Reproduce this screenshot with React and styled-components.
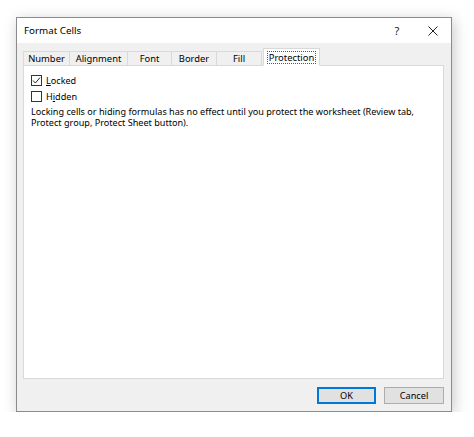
import React from 'react'
import styled, { createGlobalStyle } from 'styled-components'

const GlobalStyle = createGlobalStyle`
  body {
    margin: 0;
    background: #ffffff;
    font-family: "Noto Sans", "Open Sans", sans-serif;
    font-size: 9.1px;
    color: #000000;
  }
`

const Page = styled.div`
  padding: 17px 0 0 16px;
`

const Dialog = styled.div`
  background: #f0f0f0;
  border: 1px solid #8c8c8c;
  box-shadow: 2px 3px 14px rgba(0, 0, 0, 0.22);
  box-sizing: border-box;
  display: flex;
  flex-direction: column;
  height: 395px;
  width: 436px;
`

const TitleBar = styled.div`
  align-items: center;
  background: #ffffff;
  display: flex;
  height: 25px;
  padding-left: 7px;
`

const Title = styled.div`
  flex: 1;
  font-size: 9.8px;
`

const TitleButton = styled.div`
  align-items: center;
  color: #222;
  display: flex;
  font-size: 11px;
  height: 25px;
  justify-content: center;
  width: 36px;
`

const Body = styled.div`
  display: flex;
  flex: 1;
  flex-direction: column;
  padding: 5px 7px 0 6px;
`

const TabRow = styled.div`
  align-items: flex-end;
  display: flex;
  height: 18px;
  margin-bottom: -1px;
  position: relative;
  z-index: 1;
`

const Tab = styled.div`
  align-items: center;
  background: ${p => (p.active ? '#ffffff' : '#f0f0f0')};
  border: 1px solid #d9d9d9;
  border-bottom: ${p => (p.active ? '1px solid #ffffff' : '1px solid #d9d9d9')};
  border-left: ${p => (p.first || p.active ? '1px solid #d9d9d9' : 'none')};
  box-sizing: border-box;
  display: flex;
  height: ${p => (p.active ? '18px' : '15px')};
  justify-content: center;
  margin-left: ${p => (p.active ? '1px' : '0')};
  min-width: ${p => p.width}px;
`

const TabLabel = styled.span`
  font-size: 9.4px;
  line-height: 11px;
  outline: ${p => (p.focused ? '1px dotted #555' : 'none')};
  padding: 0 1px;
`

const Panel = styled.div`
  background: #ffffff;
  border: 1px solid #d9d9d9;
  box-sizing: border-box;
  height: 314px;
  padding: 6px 7px 0 7px;
`

const CheckRow = styled.label`
  align-items: center;
  display: flex;
  gap: 4px;
  height: 16px;
`

const Box = styled.span`
  align-items: center;
  background: #ffffff;
  border: 1px solid #333333;
  box-sizing: border-box;
  display: flex;
  height: 11px;
  justify-content: center;
  width: 11px;
`

const Note = styled.p`
  line-height: 11px;
  margin: 2px 0 0 0;
`

const Footer = styled.div`
  display: flex;
  gap: 8px;
  justify-content: flex-end;
  padding: 8px 0 7px 0;
`

const Button = styled.button`
  background: #e1e1e1;
  border: 1px solid ${p => (p.primary ? '#0078d7' : '#adadad')};
  box-shadow: ${p => (p.primary ? 'inset 0 0 0 1px #0078d7' : 'none')};
  box-sizing: border-box;
  color: #000000;
  font-family: inherit;
  font-size: 9.2px;
  height: 17px;
  padding: 0;
  width: ${p => p.width}px;
`

const tabs = [
  { name: 'Number', width: 47 },
  { name: 'Alignment', width: 58 },
  { name: 'Font', width: 44 },
  { name: 'Border', width: 45 },
  { name: 'Fill', width: 45 },
  { name: 'Protection', width: 57, active: true },
]

const Check = () => (
  <svg width="9" height="9" viewBox="0 0 9 9">
    <path d="M1 4.5 L3.4 7 L8 1.6" fill="none" stroke="#222" strokeWidth="1" />
  </svg>
)

const Close = () => (
  <svg width="10" height="10" viewBox="0 0 10 10">
    <path d="M0.5 0.5 L9.5 9.5 M9.5 0.5 L0.5 9.5" stroke="#222" strokeWidth="1" />
  </svg>
)

const App = () => (
  <>
    <GlobalStyle />
    <Page>
      <Dialog>
        <TitleBar>
          <Title>Format Cells</Title>
          <TitleButton>?</TitleButton>
          <TitleButton>
            <Close />
          </TitleButton>
        </TitleBar>
        <Body>
          <TabRow>
            {tabs.map((t, i) => (
              <Tab key={t.name} active={t.active} first={i === 0} width={t.width}>
                <TabLabel focused={t.active}>{t.name}</TabLabel>
              </Tab>
            ))}
          </TabRow>
          <Panel>
            <CheckRow>
              <Box>
                <Check />
              </Box>
              <span>
                <u>L</u>ocked
              </span>
            </CheckRow>
            <CheckRow>
              <Box />
              <span>
                H<u>i</u>dden
              </span>
            </CheckRow>
            <Note>
              Locking cells or hiding formulas has no effect until you protect the worksheet (Review tab,
              <br />
              Protect group, Protect Sheet button).
            </Note>
          </Panel>
          <Footer>
            <Button primary width={59}>
              OK
            </Button>
            <Button width={60}>Cancel</Button>
          </Footer>
        </Body>
      </Dialog>
    </Page>
  </>
)

export default App
